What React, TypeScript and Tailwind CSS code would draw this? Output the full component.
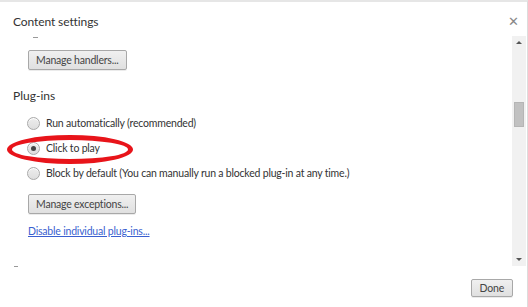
import React from 'react';

const font = { fontFamily: 'Lato, "Liberation Sans", Arial, sans-serif' };

const Radio: React.FC<{ checked?: boolean; label: string }> = ({ checked, label }) => (
  <div className="flex items-center h-[25px]">
    <span className="w-[13px] h-[13px] rounded-full border border-[#a9a9a9] bg-gradient-to-b from-[#ededed] to-[#dedede] flex items-center justify-center shadow-[inset_0_1px_0_#fff]">
      {checked && <span className="w-[5px] h-[5px] rounded-full bg-[#444]" />}
    </span>
    <span className="ml-[6px] text-[10.5px] tracking-[-0.2px] text-[#333]">{label}</span>
  </div>
);

const Button: React.FC<{ children: React.ReactNode; className?: string }> = ({ children, className }) => (
  <button
    className={`h-[20px] px-[7px] rounded-[2px] border border-[#a8a8a8] bg-gradient-to-b from-[#f0f0f0] to-[#e0e0e0] text-[10.5px] tracking-[-0.2px] text-[#444] shadow-[0_1px_0_rgba(0,0,0,0.08)] leading-none ${className ?? ''}`}
  >
    {children}
  </button>
);

export default function App() {
  return (
    <div
      className="relative w-[528px] h-[307px] bg-white border-t-2 border-t-[#e6e6e6] border-r border-r-[#dcdcdc] flex flex-col overflow-hidden"
      style={font}
    >
      {/* header */}
      <div className="flex items-start justify-between h-[34px] pl-[13px] pr-[8px] pt-[11px]">
        <h1 className="text-[12px] tracking-[-0.1px] text-[#333]">Content settings</h1>
        <span className="text-[13px] leading-none text-[#888] mt-[2px]">✕</span>
      </div>

      {/* scroll area */}
      <div className="flex h-[230px]">
        <div className="flex-1 overflow-hidden pl-[28px]">
          <div className="w-[5px] h-px bg-[#999] ml-[5px] mt-[1px]" />
          <Button className="mt-[12px]">Manage handlers...</Button>

          <h2 className="text-[12px] text-[#333] -ml-[15px] mt-[18px] leading-[16px]">Plug-ins</h2>

          <div className="mt-[7px] -ml-[1px]">
            <Radio label="Run automatically (recommended)" />
            <Radio checked label="Click to play" />
            <Radio label="Block by default (You can manually run a blocked plug-in at any time.)" />
          </div>

          <Button className="mt-[8px]">Manage exceptions...</Button>

          <div className="mt-[3px]">
            <a className="text-[10.5px] tracking-[-0.2px] text-[#3a5fd0] underline">Disable individual plug-ins...</a>
          </div>
        </div>

        {/* scrollbar */}
        <div className="w-[14px] mr-[1px] bg-[#f1f1f1] flex flex-col items-center">
          <span className="mt-[5px] w-0 h-0 border-l-[3px] border-r-[3px] border-b-[3px] border-l-transparent border-r-transparent border-b-[#555]" />
          <div className="mt-[58px] w-[10px] h-[25px] bg-[#c1c1c1] border border-[#b5b5b5]" />
          <div className="flex-1" />
          <span className="mb-[5px] w-0 h-0 border-l-[3px] border-r-[3px] border-t-[3px] border-l-transparent border-r-transparent border-t-[#555]" />
        </div>
      </div>

      <div className="pl-[14px] h-[4px]">
        <div className="w-[4px] h-px bg-[#999] mt-[0px]" />
      </div>

      {/* footer */}
      <div className="flex justify-end pr-[14px] mt-[9px]">
        <Button className="!h-[18px] !px-[8px] text-[#333]">Done</Button>
      </div>

      {/* red annotation ellipse */}
      <div className="absolute left-[7px] top-[133px] w-[126px] h-[29px] rounded-[50%] border-[5px] border-[#e8141a]" />
    </div>
  );
}
